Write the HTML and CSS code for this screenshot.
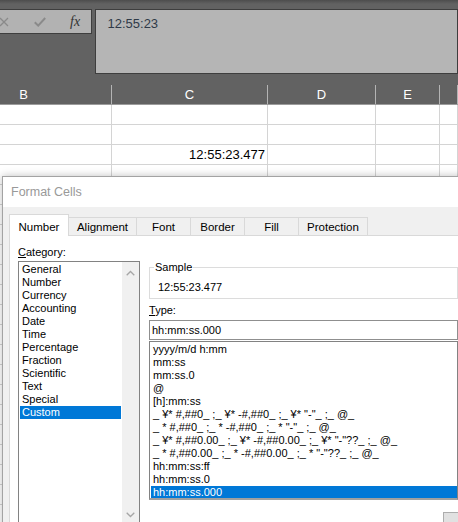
FILE: index.html
```html
<!DOCTYPE html>
<html>

<head>
    <meta charset="utf-8">
    <title>Format Cells</title>
    <link rel="stylesheet" href="styles.css">
</head>

<body>
    <div class="formula-bar">
        <div class="fx-tools">
            <svg class="ico-x" width="10" height="10" viewBox="0 0 10 10">
                <path d="M1 1 L9 9 M9 1 L1 9" stroke="#8a8a8a" stroke-width="1.3" fill="none" />
            </svg>
            <svg class="ico-ok" width="12" height="10" viewBox="0 0 12 10">
                <path d="M0.8 5.2 L4.2 8.6 L11.2 1" stroke="#8a8a8a" stroke-width="2" fill="none" />
            </svg>
            <span class="ico-fx">fx</span>
        </div>
        <div class="formula-input">12:55:23</div>
    </div>

    <div class="sheet">
        <div class="col-head">
            <div>B</div><div>C</div><div>D</div><div>E</div><div></div>
        </div>
        <div class="row"><div></div><div></div><div></div><div></div><div></div></div>
        <div class="row"><div></div><div></div><div></div><div></div><div></div></div>
        <div class="row"><div></div><div class="cell-time">12:55:23.477</div><div></div><div></div><div></div></div>
        <div class="row"><div></div><div></div><div></div><div></div><div></div></div>
        <div class="row"><div></div><div></div><div></div><div></div><div></div></div>
        <div class="row"><div></div><div></div><div></div><div></div><div></div></div>
        <div class="row"><div></div><div></div><div></div><div></div><div></div></div>
        <div class="row"><div></div><div></div><div></div><div></div><div></div></div>
        <div class="row"><div></div><div></div><div></div><div></div><div></div></div>
        <div class="row"><div></div><div></div><div></div><div></div><div></div></div>
        <div class="row"><div></div><div></div><div></div><div></div><div></div></div>
        <div class="row"><div></div><div></div><div></div><div></div><div></div></div>
        <div class="row"><div></div><div></div><div></div><div></div><div></div></div>
        <div class="row"><div></div><div></div><div></div><div></div><div></div></div>
        <div class="row"><div></div><div></div><div></div><div></div><div></div></div>
        <div class="row"><div></div><div></div><div></div><div></div><div></div></div>
        <div class="row"><div></div><div></div><div></div><div></div><div></div></div>
        <div class="row"><div></div><div></div><div></div><div></div><div></div></div>
        <div class="row"><div></div><div></div><div></div><div></div><div></div></div>
        <div class="row"><div></div><div></div><div></div><div></div><div></div></div>
        <div class="row"><div></div><div></div><div></div><div></div><div></div></div>
    </div>

    <div class="dialog">
        <div class="dlg-title">Format Cells</div>
        <div class="dlg-body">
            <div class="tabs">
                <div class="tab active">Number</div>
                <div class="tab">Alignment</div>
                <div class="tab">Font</div>
                <div class="tab">Border</div>
                <div class="tab">Fill</div>
                <div class="tab">Protection</div>
            </div>
            <div class="panel">
                <div class="cat-col">
                    <div class="cat-label"><u>C</u>ategory:</div>
                    <div class="cat-list">
                        <ul class="cat-items">
                            <li>General</li>
                            <li>Number</li>
                            <li>Currency</li>
                            <li>Accounting</li>
                            <li>Date</li>
                            <li>Time</li>
                            <li>Percentage</li>
                            <li>Fraction</li>
                            <li>Scientific</li>
                            <li>Text</li>
                            <li>Special</li>
                            <li class="sel">Custom</li>
                        </ul>
                        <div class="scroll">
                            <svg width="9" height="6" viewBox="0 0 9 6">
                                <path d="M0.7 5.3 L4.5 1.5 L8.3 5.3" stroke="#a6a6a6" stroke-width="1.3" fill="none" />
                            </svg>
                            <svg width="9" height="6" viewBox="0 0 9 6">
                                <path d="M0.7 0.7 L4.5 4.5 L8.3 0.7" stroke="#a6a6a6" stroke-width="1.3" fill="none" />
                            </svg>
                        </div>
                    </div>
                </div>

                <div class="fmt-col">
                    <fieldset class="sample">
                        <legend>Sample</legend>
                        <div class="sample-value">12:55:23.477</div>
                    </fieldset>
                    <div class="type-label"><u>T</u>ype:</div>
                    <div class="type-input">hh:mm:ss.000</div>
                    <ul class="type-list">
                        <li>yyyy/m/d h:mm</li>
                        <li>mm:ss</li>
                        <li>mm:ss.0</li>
                        <li>@</li>
                        <li>[h]:mm:ss</li>
                        <li>_ ¥* #,##0_ ;_ ¥* -#,##0_ ;_ ¥* "-"_ ;_ @_</li>
                        <li>_ * #,##0_ ;_ * -#,##0_ ;_ * "-"_ ;_ @_</li>
                        <li>_ ¥* #,##0.00_ ;_ ¥* -#,##0.00_ ;_ ¥* "-"??_ ;_ @_</li>
                        <li>_ * #,##0.00_ ;_ * -#,##0.00_ ;_ * "-"??_ ;_ @_</li>
                        <li>hh:mm:ss:ff</li>
                        <li>hh:mm:ss.0</li>
                        <li class="sel">hh:mm:ss.000</li>
                    </ul>
                    <div class="actions">
                        <button aria-label="Delete"></button>
                    </div>
                </div>
            </div>
        </div>
    </div>
</body>

</html>
```

FILE: styles.css
```css
* {
    margin: 0;
    padding: 0;
    box-sizing: border-box;
}

body {
    width: 458px;
    height: 522px;
    overflow: hidden;
    position: relative;
    background: #fff;
    font-family: "Liberation Sans", Arial, sans-serif;
    color: #000;
}

/* formula bar */
.formula-bar {
    height: 74px;
    padding-top: 9px;
    display: flex;
    align-items: flex-start;
    background: #626262;
    background-image: linear-gradient(#4d4d4d, #626262 4px);
}

.fx-tools {
    width: 101px;
    height: 25px;
    margin-left: -6px;
    padding: 7px 0 0 4px;
    display: flex;
    align-items: flex-start;
    gap: 24px;
    background: #b2b2b2;
    border: 1px solid #3e3e3e;
}

.ico-ok {
    margin-left: 1px;
}

.ico-fx {
    margin-top: -2px;
    font-family: "Liberation Serif", serif;
    font-style: italic;
    font-size: 14px;
    line-height: 14px;
    color: #333;
}

.formula-input {
    width: 372px;
    height: 65px;
    margin-left: 3px;
    padding: 6px 0 0 11px;
    background: #b5b5b5;
    border: 1px solid #3e3e3e;
    font-size: 13px;
    line-height: 15px;
    color: #2f3a48;
}

/* sheet */
.sheet {
    margin-left: -64px;
}

.col-head,
.row {
    display: grid;
    grid-template-columns: 176px 156px 108px 64px 1fr;
}

.col-head {
    height: 31px;
    padding-top: 11px;
    background: #626262;
    border-bottom: 1px solid #9c9c9c;
}

.col-head div {
    border-right: 1px solid #b4b4b4;
    color: #fff;
    font-size: 13px;
    line-height: 19px;
    text-align: center;
}

.row {
    height: 20px;
    border-bottom: 1px solid #d4d4d4;
}

.row div {
    border-right: 1px solid #d4d4d4;
}

.row .cell-time {
    padding-right: 2px;
    text-align: right;
    font-size: 13px;
    line-height: 19px;
}

/* dialog */
.dialog {
    position: absolute;
    left: 2px;
    top: 176px;
    width: 480px;
    height: 360px;
    background: #f0f0f0;
    border: 1px solid #a3a3a3;
    box-shadow: 0 0 8px rgba(0, 0, 0, .25);
}

.dlg-title {
    height: 30px;
    padding-left: 8px;
    background: #fff;
    font-size: 12.5px;
    line-height: 30px;
    color: #999;
}

.dlg-body {
    padding: 7px 0 0 6px;
}

.tabs {
    display: flex;
    align-items: flex-end;
    height: 21px;
    position: relative;
    z-index: 1;
}

.tab {
    min-width: 55px;
    height: 18px;
    padding: 1px 8px 0;
    margin-right: -1px;
    border: 1px solid #d9d9d9;
    border-bottom: 0;
    font-size: 11.5px;
    line-height: 17px;
    text-align: center;
}

.tab.active {
    height: 22px;
    margin-bottom: -1px;
    padding: 4px 8.5px 0;
    background: #fff;
}

.panel {
    height: 300px;
    padding: 10px 0 0 8px;
    display: grid;
    grid-template-columns: 122px 309px;
    column-gap: 9px;
    align-items: start;
    background: #fff;
    border-left: 1px solid #d9d9d9;
    border-top: 1px solid #d9d9d9;
    font-size: 11px;
    line-height: 13px;
}

.cat-list {
    height: 264px;
    margin-top: 2px;
    display: flex;
    border: 1px solid #828282;
}

.cat-items {
    flex: 1;
    padding-top: 1px;
    list-style: none;
}

.cat-items li {
    margin: 0 1px;
    padding-left: 2px;
    white-space: nowrap;
}

.sel {
    background: #0078d7;
    color: #fff;
}

.scroll {
    width: 17px;
    padding: 8px 0 6px;
    display: flex;
    flex-direction: column;
    justify-content: space-between;
    align-items: center;
    background: #f0f0f0;
}

.fmt-col {
    padding-top: 15px;
}

.sample {
    padding: 7px 8px 4px;
    border: 1px solid #dcdcdc;
}

.sample legend {
    margin-left: -4px;
    padding: 0 1px;
}

.type-label {
    margin-top: 5px;
}

.type-input {
    height: 20px;
    margin-top: 3px;
    padding-left: 2px;
    border: 1px solid #8f8f8f;
    line-height: 18px;
}

.type-list {
    height: 159px;
    margin-top: 1px;
    padding-top: 1px;
    overflow: hidden;
    list-style: none;
    border: 1px solid #828282;
    border-bottom: 2px solid #a0a0a0;
}

.type-list li {
    margin-left: 1px;
    padding-left: 2px;
    white-space: nowrap;
}

.actions {
    margin-top: 12px;
    padding-left: 294px;
}

.actions button {
    width: 75px;
    height: 23px;
    background: #e1e1e1;
    border: 1px solid #adadad;
}
```
